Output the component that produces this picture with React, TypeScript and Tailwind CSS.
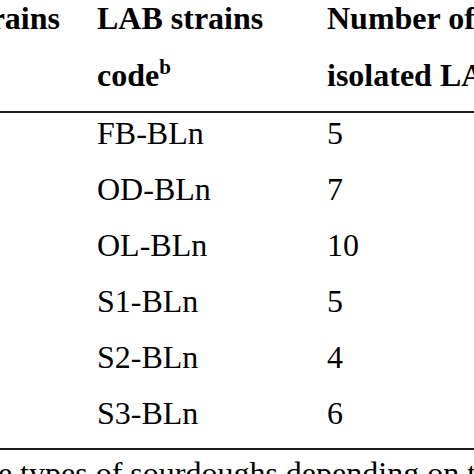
import React from "react";

const rows = [
  ["FB-BLn", "5"],
  ["OD-BLn", "7"],
  ["OL-BLn", "10"],
  ["S1-BLn", "5"],
  ["S2-BLn", "4"],
  ["S3-BLn", "6"],
];

export default function App() {
  return (
    <div
      className="w-[474px] h-[474px] overflow-hidden bg-white text-black text-[32px]"
      style={{ fontFamily: '"Liberation Serif", "Times New Roman", serif' }}
    >
      <div className="mt-[-10px] grid grid-cols-[97px_230px_1fr] font-bold leading-[57px] pb-[7px]">
        <div className="flex justify-end pr-[37px] whitespace-nowrap">
          <span>Sourdough strains</span>
        </div>
        <div className="whitespace-nowrap">
          <div>LAB strains</div>
          <div>
            code<span className="text-[21px] leading-[0px] relative top-[-12px]">b</span>
          </div>
        </div>
        <div className="whitespace-nowrap">
          <div>Number of</div>
          <div>isolated LAB</div>
        </div>
      </div>
      <div className="h-[2px] bg-[#1c1c1c]" />
      <div className="flex flex-col gap-[16px] pb-[15px]">
        {rows.map(([code, n]) => (
          <div key={code} className="grid grid-cols-[97px_230px_1fr] leading-[40px] whitespace-nowrap">
            <div />
            <div>{code}</div>
            <div>{n}</div>
          </div>
        ))}
      </div>
      <div className="h-[2px] bg-[#1c1c1c]" />
      <div className="mt-[7px] leading-[32px] whitespace-nowrap ml-[-27px]">
        the types of sourdoughs depending on the
      </div>
    </div>
  );
}
